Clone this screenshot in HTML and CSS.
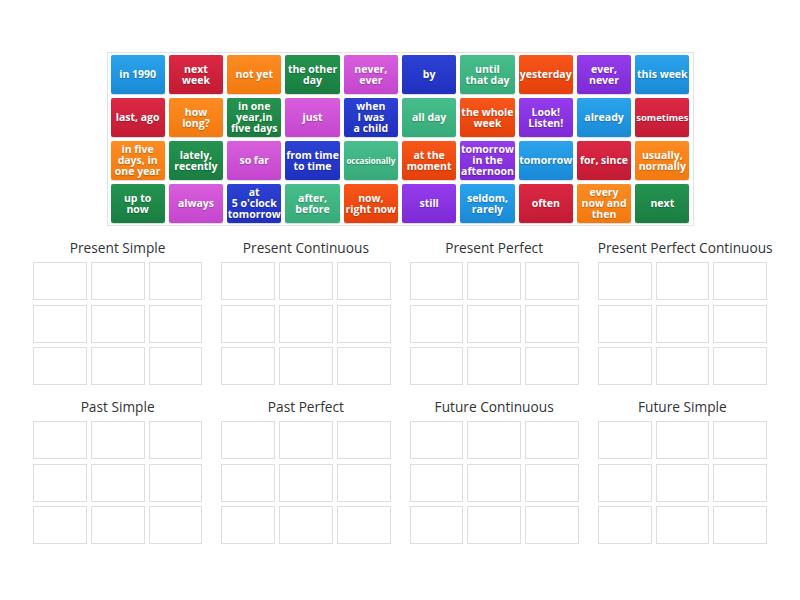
FILE: index.html
```html
<!DOCTYPE html>
<html>
<head>
<meta charset="utf-8">
<link rel="stylesheet" href="styles.css">
</head>
<body>
<div class="page">
  <div class="tray">
    <div class="tile blue">in 1990</div>
    <div class="tile red">next<br>week</div>
    <div class="tile orange">not yet</div>
    <div class="tile green">the other<br>day</div>
    <div class="tile pink">never,<br>ever</div>
    <div class="tile navy">by</div>
    <div class="tile teal">until<br>that day</div>
    <div class="tile flame">yesterday</div>
    <div class="tile purple">ever,<br>never</div>
    <div class="tile blue">this week</div>

    <div class="tile red">last, ago</div>
    <div class="tile orange">how<br>long?</div>
    <div class="tile green">in one<br>year,in<br>five days</div>
    <div class="tile pink">just</div>
    <div class="tile navy">when<br>I was<br>a child</div>
    <div class="tile teal">all day</div>
    <div class="tile flame">the whole<br>week</div>
    <div class="tile purple">Look!<br>Listen!</div>
    <div class="tile blue">already</div>
    <div class="tile red small">sometimes</div>

    <div class="tile orange">in five<br>days, in<br>one year</div>
    <div class="tile green">lately,<br>recently</div>
    <div class="tile pink">so far</div>
    <div class="tile navy">from time<br>to time</div>
    <div class="tile teal tiny">occasionally</div>
    <div class="tile flame">at the<br>moment</div>
    <div class="tile purple">tomorrow<br>in the<br>afternoon</div>
    <div class="tile blue">tomorrow</div>
    <div class="tile red">for, since</div>
    <div class="tile orange">usually,<br>normally</div>

    <div class="tile green">up to<br>now</div>
    <div class="tile pink">always</div>
    <div class="tile navy">at<br>5 o'clock<br>tomorrow</div>
    <div class="tile teal">after,<br>before</div>
    <div class="tile flame">now,<br>right now</div>
    <div class="tile purple">still</div>
    <div class="tile blue">seldom,<br>rarely</div>
    <div class="tile red">often</div>
    <div class="tile orange">every<br>now and<br>then</div>
    <div class="tile green">next</div>
  </div>

  <div class="groups">
    <div class="group">
      <div class="title">Present Simple</div>
      <div class="slots"><div></div><div></div><div></div><div></div><div></div><div></div><div></div><div></div><div></div></div>
    </div>
    <div class="group">
      <div class="title">Present Continuous</div>
      <div class="slots"><div></div><div></div><div></div><div></div><div></div><div></div><div></div><div></div><div></div></div>
    </div>
    <div class="group">
      <div class="title">Present Perfect</div>
      <div class="slots"><div></div><div></div><div></div><div></div><div></div><div></div><div></div><div></div><div></div></div>
    </div>
    <div class="group">
      <div class="title">Present Perfect Continuous</div>
      <div class="slots"><div></div><div></div><div></div><div></div><div></div><div></div><div></div><div></div><div></div></div>
    </div>
    <div class="group">
      <div class="title">Past Simple</div>
      <div class="slots"><div></div><div></div><div></div><div></div><div></div><div></div><div></div><div></div><div></div></div>
    </div>
    <div class="group">
      <div class="title">Past Perfect</div>
      <div class="slots"><div></div><div></div><div></div><div></div><div></div><div></div><div></div><div></div><div></div></div>
    </div>
    <div class="group">
      <div class="title">Future Continuous</div>
      <div class="slots"><div></div><div></div><div></div><div></div><div></div><div></div><div></div><div></div><div></div></div>
    </div>
    <div class="group">
      <div class="title">Future Simple</div>
      <div class="slots"><div></div><div></div><div></div><div></div><div></div><div></div><div></div><div></div><div></div></div>
    </div>
  </div>
</div>
</body>
</html>
```

FILE: styles.css
```css
html, body {
  margin: 0;
  padding: 0;
  background: #ffffff;
  font-family: "Open Sans", "Liberation Sans", sans-serif;
}

.page {
  width: 800px;
  height: 600px;
  padding-top: 52px;
  box-sizing: border-box;
}

.tray {
  width: 587px;
  margin: 0 auto;
  box-sizing: border-box;
  border: 1px solid #e2e2e2;
  padding: 2px 3px;
  display: grid;
  grid-template-columns: repeat(10, minmax(0, 1fr));
  grid-auto-rows: 39px;
  gap: 4px;
  background: #fff;
}

.tile {
  display: flex;
  align-items: center;
  justify-content: center;
  text-align: center;
  color: #fff;
  font-weight: 700;
  font-size: 10.5px;
  line-height: 11px;
  border-radius: 2px;
  text-shadow: 0 1px 1px rgba(0, 0, 0, 0.25);
  box-shadow: 0 1px 1px rgba(0, 0, 0, 0.15);
  white-space: nowrap;
  overflow: hidden;
}

.tile.small { font-size: 9.5px; }
.tile.tiny { font-size: 8px; }

.blue   { background: linear-gradient(#2aa4ec, #1a89d6); }
.red    { background: linear-gradient(#dc2844, #c21b34); }
.orange { background: linear-gradient(#fd8c22, #f27a10); }
.green  { background: linear-gradient(#249450, #1a7d41); }
.pink   { background: linear-gradient(#d95edc, #c346ce); }
.navy   { background: linear-gradient(#2c42d4, #1f30be); }
.teal   { background: linear-gradient(#48be8d, #37aa79); }
.flame  { background: linear-gradient(#f8561a, #e3400b); }
.purple { background: linear-gradient(#953cec, #7d2ad6); }

.groups {
  width: 734px;
  margin: 10px auto 0;
  display: grid;
  grid-template-columns: repeat(4, minmax(0, 1fr));
  column-gap: 19px;
  row-gap: 10px;
}

.group {
  display: flex;
  flex-direction: column;
  min-width: 0;
}

.title {
  height: 26px;
  line-height: 24px;
  text-align: center;
  font-size: 13.7px;
  color: #333;
  white-space: nowrap;
}

.slots {
  display: grid;
  grid-template-columns: repeat(3, minmax(0, 1fr));
  grid-auto-rows: 38px;
  gap: 4.5px 4px;
}

.slots div {
  border: 1px solid #dedede;
  box-sizing: border-box;
  background: #fff;
}
```
